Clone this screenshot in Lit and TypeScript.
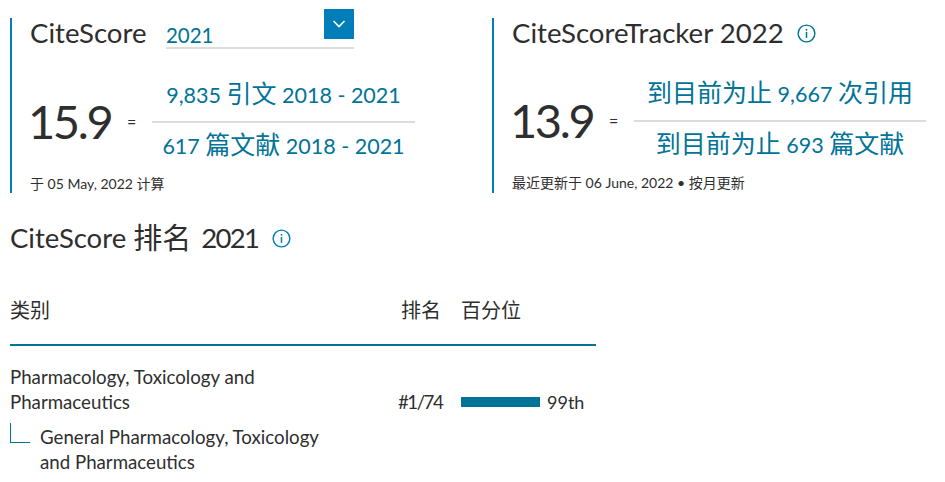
import { LitElement, html, css } from "lit";
import { customElement } from "lit/decorators.js";

const info = html`<svg class="info" viewBox="0 0 20 20" aria-hidden="true">
  <circle cx="10" cy="10" r="8.8" fill="none" stroke="currentColor" stroke-width="1.5"></circle>
  <rect x="9.2" y="8.4" width="1.6" height="6.2" fill="currentColor"></rect>
  <rect x="9.2" y="5.2" width="1.6" height="1.8" fill="currentColor"></rect>
</svg>`;

@customElement("app-root")
export class AppRoot extends LitElement {
  static styles = css`
    :host {
      display: block;
      width: 945px;
      height: 482px;
      overflow: hidden;
      background: #fff;
      color: #2e2e2e;
      font-family: "Lato", "Noto Sans CJK SC", sans-serif;
    }
    .top {
      display: flex;
      padding: 18px 0 0 10px;
      height: 175px;
    }
    .panel {
      border-left: 2px solid #007eb9;
      padding-left: 18px;
      height: 175px;
      box-sizing: border-box;
      display: flex;
      flex-direction: column;
    }
    .panel.a { width: 482px; }
    .panel.b { width: 440px; }
    .head {
      display: flex;
      align-items: flex-start;
      height: 32px;
      font-size: 27.6px;
      line-height: 30px;
      white-space: nowrap;
    }
    .select {
      position: relative;
      margin-left: 19.4px;
      width: 188px;
      height: 31px;
      border-bottom: 2px solid #dcdcdc;
      color: #007398;
      font-size: 20.5px;
      line-height: 34px;
      box-sizing: border-box;
    }
    .drop {
      position: absolute;
      right: 0;
      top: -9px;
      width: 30px;
      height: 30px;
      background: #007eb9;
      display: flex;
      align-items: center;
      justify-content: center;
    }
    .drop svg { width: 14px; height: 10px; }
    .info { width: 19px; height: 19px; color: #007eb9; flex: none; }
    .head .info { margin: 6px 0 0 13px; color: #007398; }
    .formula {
      display: flex;
      align-items: center;
      margin-top: 22px;
      height: 100px;
    }
    .score {
      width: 81px;
      font-size: 47px;
      letter-spacing: -2.4px;
      line-height: 60px;
      white-space: nowrap;
      text-indent: -2px;
    }
    .eq { width: 9px; font-size: 16px; margin: 0 16px; }
    .frac {
      color: #007398;
      font-size: 21.5px;
      display: flex;
      flex-direction: column;
      text-align: center;
    }
    .c { font-size: 25px; }
    .frac div { height: 50px; line-height: 44px; white-space: nowrap; }
    .frac .num { border-bottom: 2px solid #dcdcdc; margin-bottom: -1px; }
    .a .frac { width: 263px; }
    .b .frac { width: 292px; }
    .note { font-size: 14px; line-height: 20px; margin-top: 3px; white-space: nowrap; }

    .rank {
      padding-left: 10px;
      margin-top: 25px;
      width: 586px;
    }
    h2 {
      margin: 0;
      font-weight: 400;
      font-size: 27.5px;
      line-height: 40px;
      display: flex;
      align-items: center;
      white-space: pre;
    }
    h2 .c { font-size: 29px; margin-right: 10px; }
    h2 .y { letter-spacing: -1.7px; }
    h2 .info { margin-left: 14px; }
    .row {
      display: grid;
      grid-template-columns: 391px 60px 1fr;
    }
    .thead {
      margin-top: 34px;
      border-bottom: 2px solid #007398;
      font-size: 20px;
      line-height: 30px;
      padding-top: 3px;
      box-sizing: content-box;
      height: 49px;
    }
    .body {
      font-size: 18.7px;
      line-height: 25px;
      padding-top: 19px;
    }
    .cat { width: 320px; }
    .sub {
      position: relative;
      padding-left: 30px;
      margin-top: 10px;
      width: 290px;
    }
    .sub::before {
      content: "";
      position: absolute;
      left: 0;
      top: -2px;
      width: 19px;
      height: 19px;
      border-left: 1px solid #007398;
      border-bottom: 1px solid #007398;
    }
    .rankv {
      margin-left: -3px;
      align-self: start;
      margin-top: 25px;
      letter-spacing: -1.5px;
    }
    .pct {
      display: flex;
      align-items: center;
      gap: 7px;
      align-self: start;
      margin-top: 25px;
      font-size: 18px;
    }
    .bar { width: 79px; height: 10px; background: #007398; margin-top: -2px; }
  `;

  render() {
    return html`
      <div class="top">
        <section class="panel a">
          <div class="head">
            <span>CiteScore</span>
            <div class="select">2021
              <span class="drop"><svg viewBox="0 0 14 10"><path d="M1.5 2 L7 7.5 L12.5 2" fill="none" stroke="#fff" stroke-width="1.6"></path></svg></span>
            </div>
          </div>
          <div class="formula">
            <span class="score">15.9</span>
            <span class="eq">=</span>
            <div class="frac">
              <div class="num">9,835 <span class="c">引文</span> 2018 - 2021</div>
              <div>617 <span class="c">篇文献</span> 2018 - 2021</div>
            </div>
          </div>
          <div class="note">于 05 May, 2022 计算</div>
        </section>
        <section class="panel b">
          <div class="head"><span>CiteScoreTracker 2022</span>${info}</div>
          <div class="formula">
            <span class="score">13.9</span>
            <span class="eq">=</span>
            <div class="frac">
              <div class="num"><span class="c">到目前为止</span> 9,667 <span class="c">次引用</span></div>
              <div><span class="c">到目前为止</span> 693 <span class="c">篇文献</span></div>
            </div>
          </div>
          <div class="note">最近更新于 06 June, 2022 • 按月更新</div>
        </section>
      </div>
      <section class="rank">
        <h2>CiteScore <span class="c">排名</span><span class="y">2021</span>${info}</h2>
        <div class="row thead">
          <div>类别</div><div>排名</div><div>百分位</div>
        </div>
        <div class="row body">
          <div>
            <div class="cat">Pharmacology, Toxicology and Pharmaceutics</div>
            <div class="sub">General Pharmacology, Toxicology and Pharmaceutics</div>
          </div>
          <div class="rankv">#1/74</div>
          <div class="pct"><span class="bar"></span><span>99th</span></div>
        </div>
      </section>
    `;
  }
}
